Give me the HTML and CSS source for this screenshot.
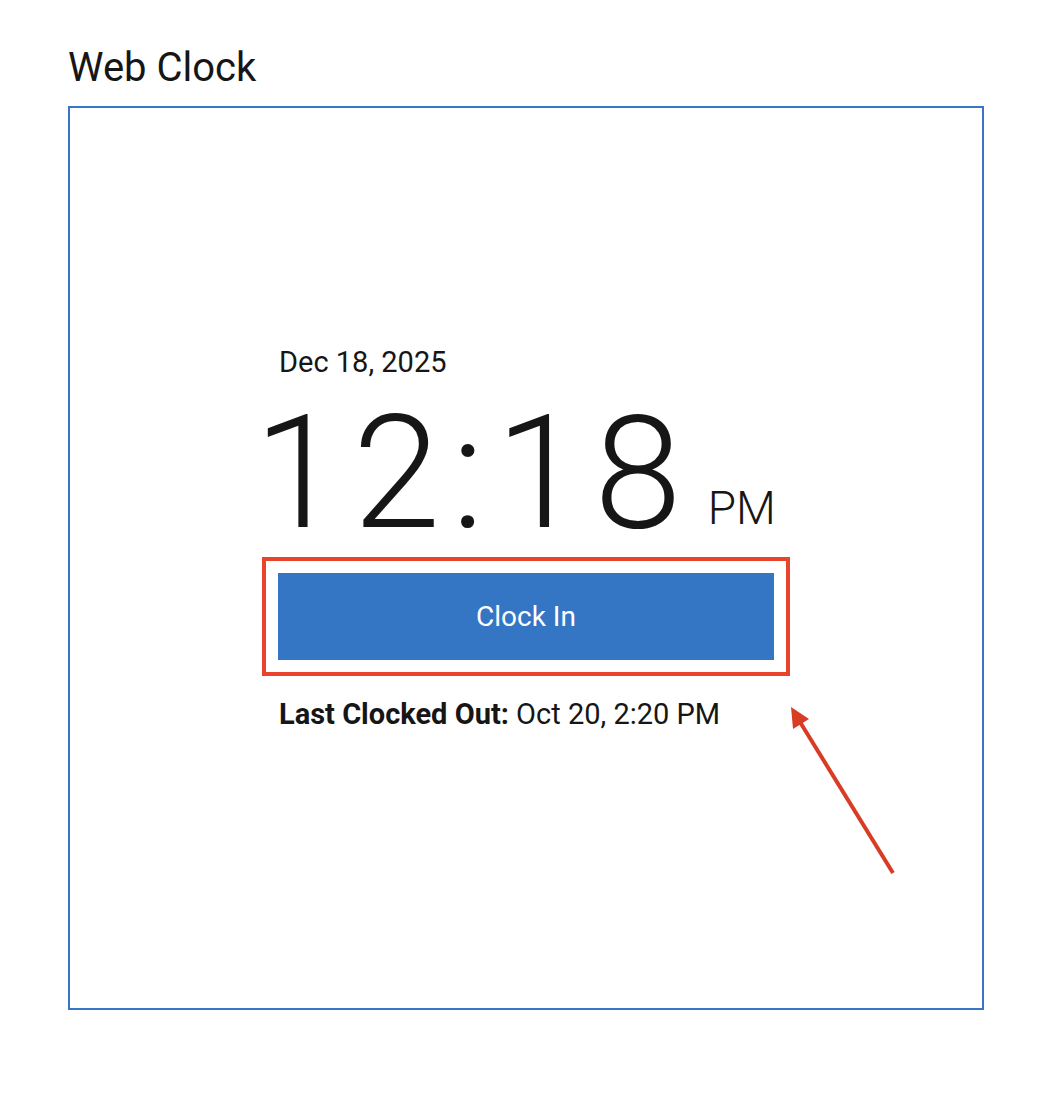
FILE: index.html
```html
<!DOCTYPE html>
<html lang="en">
<head>
    <meta charset="UTF-8">
    <meta name="viewport" content="width=device-width, initial-scale=1.0">
    <title>Web Clock</title>
    <link rel="stylesheet" href="styles.css">
</head>
<body>
    <div class="page">
        <h1 class="page-title">Web Clock</h1>
        <div class="clock-card">
            <div class="clock">
                <div class="clock-date">Dec 18, 2025</div>
                <div class="clock-time">
                    <span class="clock-hours">12:18</span>
                    <span class="clock-ampm">PM</span>
                </div>
                <div class="highlight">
                    <button class="clock-btn" type="button">Clock In</button>
                </div>
                <div class="clock-last"><strong>Last Clocked Out:</strong> Oct 20, 2:20 PM</div>
            </div>

            <!-- annotation arrow pointing at the button -->
            <svg class="pointer" width="120" height="185" viewBox="0 0 120 185">
                <line x1="113" y1="173" x2="20" y2="22" stroke="#d93c24" stroke-width="4"/>
                <polygon points="11,7 13,29 29,19" fill="#d93c24"/>
            </svg>
        </div>
    </div>
</body>
</html>
```

FILE: styles.css
```css
body {
    margin: 0;
    padding: 0;
    background-color: #ffffff;
    color: #161616;
    font-family: Roboto, "Liberation Sans", Arial, sans-serif;
}

.page {
    padding: 44px 0 0 68px;
}

.page-title {
    margin: 0 0 14px;
    font-size: 40px;
    line-height: 48px;
    font-weight: 400;
}

.clock-card {
    position: relative;
    box-sizing: border-box;
    width: 916px;
    height: 904px;
    border: 2px solid #3776c4;
    display: flex;
    flex-direction: column;
    align-items: center;
    padding-top: 237px;
}

.clock {
    width: 528px;
    display: flex;
    flex-direction: column;
}

.clock-date {
    margin-left: 17px;
    font-size: 29px;
    line-height: 34px;
}

.clock-time {
    margin: 15px 0 0 -8px;
    height: 158px;
    display: flex;
    align-items: baseline;
    gap: 15px;
}

.clock-hours {
    font-size: 158px;
    line-height: 158px;
    font-weight: 300;
    letter-spacing: 11px;
}

.clock-ampm {
    font-size: 46px;
    line-height: 46px;
    font-weight: 300;
    position: relative;
    top: -3px;
}

.highlight {
    margin-top: 5px;
    border: 4px solid #e8442b;
    padding: 12px;
}

.clock-btn {
    display: flex;
    align-items: center;
    justify-content: center;
    width: 100%;
    height: 87px;
    border: none;
    background-color: #3476c4;
    color: #ffffff;
    font-family: inherit;
    font-size: 28px;
    cursor: pointer;
}

.clock-btn:hover {
    background-color: #2a64ab;
}

.clock-last {
    margin: 21px 0 0 17px;
    font-size: 29px;
    line-height: 34px;
}

.clock-last strong {
    font-weight: 700;
}

.pointer {
    position: absolute;
    left: 710px;
    top: 592px;
}
```
